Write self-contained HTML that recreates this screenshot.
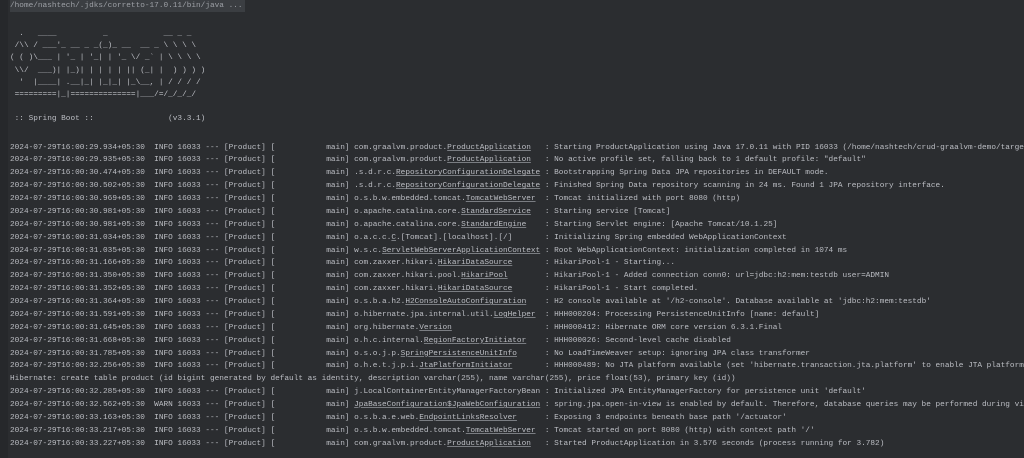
<!DOCTYPE html>
<html><head><meta charset="utf-8"><style>
html,body{margin:0;padding:0;width:1024px;height:458px;overflow:hidden;background:#2b2d30;}
body{font-family:"Liberation Mono",monospace;font-size:7.76px;color:#bcbec4;position:relative;}
.strip{position:absolute;left:0;top:0;width:8px;height:458px;background:#26282b;}
.hdr{position:absolute;left:10px;top:0;height:12px;line-height:12px;background:#3b3e42;color:#9da0a6;padding:0 2px 0 0;white-space:pre;}
pre{margin:0;font:inherit;position:absolute;left:10px;width:1014px;overflow:hidden;white-space:pre;}
.banner{top:28px;line-height:12.2px;}
.log{top:141.6px;line-height:12.87px;}
u{text-decoration:underline;text-decoration-color:#7a7d82;text-underline-offset:1px;}
</style></head><body>
<div class="strip"></div>
<div class="hdr">/home/nashtech/.jdks/corretto-17.0.11/bin/java ...</div>
<pre class="banner">  .   ____          _            __ _ _
 /\\ / ___'_ __ _ _(_)_ __  __ _ \ \ \ \
( ( )\___ | '_ | '_| | '_ \/ _` | \ \ \ \
 \\/  ___)| |_)| | | | | || (_| |  ) ) ) )
  '  |____| .__|_| |_|_| |_\__, | / / / /
 =========|_|==============|___/=/_/_/_/

 :: Spring Boot ::                (v3.3.1)</pre>
<pre class="log">2024-07-29T16:00:29.934+05:30  INFO 16033 --- [Product] [           main] com.graalvm.product.<u>ProductApplication</u>   : Starting ProductApplication using Java 17.0.11 with PID 16033 (/home/nashtech/crud-graalvm-demo/target
2024-07-29T16:00:29.935+05:30  INFO 16033 --- [Product] [           main] com.graalvm.product.<u>ProductApplication</u>   : No active profile set, falling back to 1 default profile: "default"
2024-07-29T16:00:30.474+05:30  INFO 16033 --- [Product] [           main] .s.d.r.c.<u>RepositoryConfigurationDelegate</u> : Bootstrapping Spring Data JPA repositories in DEFAULT mode.
2024-07-29T16:00:30.502+05:30  INFO 16033 --- [Product] [           main] .s.d.r.c.<u>RepositoryConfigurationDelegate</u> : Finished Spring Data repository scanning in 24 ms. Found 1 JPA repository interface.
2024-07-29T16:00:30.969+05:30  INFO 16033 --- [Product] [           main] o.s.b.w.embedded.tomcat.<u>TomcatWebServer</u>  : Tomcat initialized with port 8080 (http)
2024-07-29T16:00:30.981+05:30  INFO 16033 --- [Product] [           main] o.apache.catalina.core.<u>StandardService</u>   : Starting service [Tomcat]
2024-07-29T16:00:30.981+05:30  INFO 16033 --- [Product] [           main] o.apache.catalina.core.<u>StandardEngine</u>    : Starting Servlet engine: [Apache Tomcat/10.1.25]
2024-07-29T16:00:31.034+05:30  INFO 16033 --- [Product] [           main] o.a.c.c.<u>C</u>.[Tomcat].[localhost].[/]       : Initializing Spring embedded WebApplicationContext
2024-07-29T16:00:31.035+05:30  INFO 16033 --- [Product] [           main] w.s.c.<u>ServletWebServerApplicationContext</u> : Root WebApplicationContext: initialization completed in 1074 ms
2024-07-29T16:00:31.166+05:30  INFO 16033 --- [Product] [           main] com.zaxxer.hikari.<u>HikariDataSource</u>       : HikariPool-1 - Starting...
2024-07-29T16:00:31.350+05:30  INFO 16033 --- [Product] [           main] com.zaxxer.hikari.pool.<u>HikariPool</u>        : HikariPool-1 - Added connection conn0: url=jdbc:h2:mem:testdb user=ADMIN
2024-07-29T16:00:31.352+05:30  INFO 16033 --- [Product] [           main] com.zaxxer.hikari.<u>HikariDataSource</u>       : HikariPool-1 - Start completed.
2024-07-29T16:00:31.364+05:30  INFO 16033 --- [Product] [           main] o.s.b.a.h2.<u>H2ConsoleAutoConfiguration</u>    : H2 console available at '/h2-console'. Database available at 'jdbc:h2:mem:testdb'
2024-07-29T16:00:31.591+05:30  INFO 16033 --- [Product] [           main] o.hibernate.jpa.internal.util.<u>LogHelper</u>  : HHH000204: Processing PersistenceUnitInfo [name: default]
2024-07-29T16:00:31.645+05:30  INFO 16033 --- [Product] [           main] org.hibernate.<u>Version</u>                    : HHH000412: Hibernate ORM core version 6.3.1.Final
2024-07-29T16:00:31.668+05:30  INFO 16033 --- [Product] [           main] o.h.c.internal.<u>RegionFactoryInitiator</u>    : HHH000026: Second-level cache disabled
2024-07-29T16:00:31.785+05:30  INFO 16033 --- [Product] [           main] o.s.o.j.p.<u>SpringPersistenceUnitInfo</u>      : No LoadTimeWeaver setup: ignoring JPA class transformer
2024-07-29T16:00:32.256+05:30  INFO 16033 --- [Product] [           main] o.h.e.t.j.p.i.<u>JtaPlatformInitiator</u>       : HHH000489: No JTA platform available (set 'hibernate.transaction.jta.platform' to enable JTA platform integration)
Hibernate: create table product (id bigint generated by default as identity, description varchar(255), name varchar(255), price float(53), primary key (id))
2024-07-29T16:00:32.285+05:30  INFO 16033 --- [Product] [           main] j.LocalContainerEntityManagerFactoryBean : Initialized JPA EntityManagerFactory for persistence unit 'default'
2024-07-29T16:00:32.562+05:30  WARN 16033 --- [Product] [           main] <u>JpaBaseConfiguration$JpaWebConfiguration</u> : spring.jpa.open-in-view is enabled by default. Therefore, database queries may be performed during view
2024-07-29T16:00:33.163+05:30  INFO 16033 --- [Product] [           main] o.s.b.a.e.web.<u>EndpointLinksResolver</u>      : Exposing 3 endpoints beneath base path '/actuator'
2024-07-29T16:00:33.217+05:30  INFO 16033 --- [Product] [           main] o.s.b.w.embedded.tomcat.<u>TomcatWebServer</u>  : Tomcat started on port 8080 (http) with context path '/'
2024-07-29T16:00:33.227+05:30  INFO 16033 --- [Product] [           main] com.graalvm.product.<u>ProductApplication</u>   : Started ProductApplication in 3.576 seconds (process running for 3.782)</pre>
</body></html>
